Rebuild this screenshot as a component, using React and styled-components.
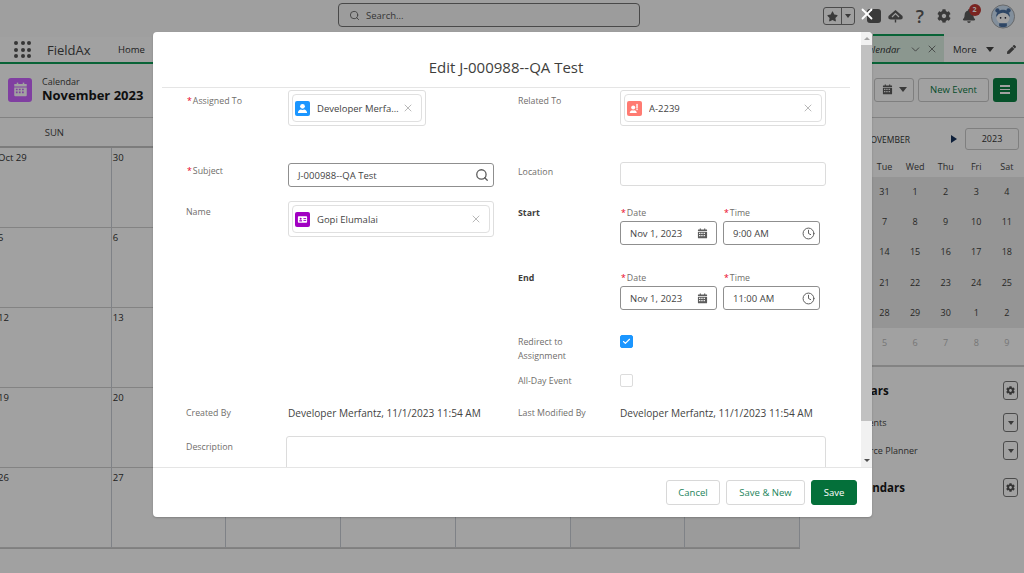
import React from "react";
import styled, { createGlobalStyle } from "styled-components";
import { X, Search, Clock, Check, ChevronDown } from "lucide-react";
import { FaBell, FaCog, FaPen, FaStar } from "react-icons/fa";

const GlobalStyle = createGlobalStyle`
  html, body {
    margin: 0;
    padding: 0;
    background: #fff;
    font-family: "Open Sans", "Liberation Sans", sans-serif;
    color: #3e3e3c;
  }
  * { box-sizing: border-box; }
`;

const Page = styled.div`
  position: relative;
  width: 1024px;
  height: 573px;
  overflow: hidden;
  background: #fff;
  display: flex;
  flex-direction: column;
`;

/* ---------- page behind the dialog ---------- */

const TopBar = styled.header`
  height: 37px;
  flex: none;
  display: flex;
  align-items: flex-start;
  padding: 3px 9px 0 338px;
  background: #fcfcfc;
`;

const SearchBox = styled.div`
  width: 302px;
  height: 24px;
  border: 1px solid #747474;
  border-radius: 4px;
  background: #f8f8f8;
  display: flex;
  align-items: center;
  gap: 6px;
  padding: 0 10px;
  font-size: 9.5px;
  color: #555;
`;

const TopIcons = styled.div`
  margin-left: auto;
  display: flex;
  align-items: center;
  height: 26px;
  color: #5c5c5c;
`;

const FavGroup = styled.div`
  width: 32px;
  height: 18px;
  border: 1px solid #777;
  border-radius: 3px;
  display: flex;
  align-items: center;
  margin-right: 12px;
`;

const FavStar = styled.span`
  width: 18px;
  display: flex;
  justify-content: center;
  border-right: 1px solid #777;
  height: 100%;
  align-items: center;
  font-size: 11px;
`;

const Caret = styled.span`
  width: 0;
  height: 0;
  border-left: ${(p) => p.$size || 3}px solid transparent;
  border-right: ${(p) => p.$size || 3}px solid transparent;
  border-top: ${(p) => (p.$size || 3) + 1}px solid ${(p) => p.$color || "#5c5c5c"};
  display: inline-block;
  flex: none;
`;

const FavCaret = styled(Caret)`
  margin-left: 3px;
`;

const PlusBox = styled.span`
  width: 14px;
  height: 14px;
  border-radius: 3px;
  background: #5c5c5c;
  margin-right: 2px;
`;

const TopIcon = styled.span`
  width: 24.5px;
  display: flex;
  justify-content: center;
  align-items: center;
  font-size: ${(p) => p.$size || 14}px;
  font-weight: 600;
  position: relative;
`;

const AvatarSlot = styled.span`
  width: 24px;
  margin-left: 10px;
  display: flex;
  justify-content: center;
`;

const Badge = styled.span`
  position: absolute;
  top: -5px;
  left: 12px;
  width: 12px;
  height: 12px;
  border-radius: 50%;
  background: #c23934;
  color: #fff;
  font-size: 7px;
  font-weight: 700;
  line-height: 12px;
  text-align: center;
`;

const NavBar = styled.nav`
  height: 27px;
  flex: none;
  display: flex;
  align-items: center;
  padding-left: 14px;
  background: #fff;
  border-bottom: 2px solid #0f9d58;
`;

const Waffle = styled.div`
  display: grid;
  grid-template-columns: repeat(3, 4px);
  gap: 2.5px;
  margin-right: 16px;
  span {
    width: 4px;
    height: 4px;
    border-radius: 50%;
    background: #555;
  }
`;

const AppName = styled.div`
  font-size: 13px;
  color: #444;
  width: 71px;
`;

const NavLink = styled.div`
  font-size: 9.5px;
  color: #333;
`;

const ActiveTab = styled.div`
  margin-left: auto;
  margin-top: -3px;
  width: 71px;
  height: 28px;
  align-self: flex-start;
  background: #dcefe3;
  border-top: 2px solid #0f9d58;
  display: flex;
  align-items: center;
  justify-content: flex-end;
  padding-right: 6px;
  font-size: 9.5px;
  font-style: italic;
  color: #333;
  > * { flex: none; }
`;

const TabLabel = styled.span`
  margin-right: 9px;
`;

const TabChevron = styled(ChevronDown)`
  margin-right: 4px;
`;

const NavMore = styled.div`
  display: flex;
  align-items: center;
  width: 80px;
  padding-left: 9px;
  font-size: 9.5px;
  color: #333;
  svg:last-child { margin-left: 13px; }
`;

const MoreLabel = styled.span`
  margin-right: 10px;
`;

const PageHeader = styled.div`
  height: 54px;
  flex: none;
  display: flex;
  align-items: center;
  padding: 0 7px 2px 8px;
  border-bottom: 1px solid #cfcfcf;
`;

const CalendarBadge = styled.div`
  width: 24px;
  height: 24px;
  border-radius: 3px;
  background: #cb65ff;
  display: flex;
  align-items: center;
  justify-content: center;
  margin-right: 10px;
`;

const TitleWrap = styled.div`
  display: flex;
  flex-direction: column;
`;

const Crumb = styled.div`
  font-size: 9px;
  line-height: 12px;
`;

const MonthTitle = styled.div`
  font-size: 13px;
  line-height: 15px;
  font-weight: 700;
  color: #181818;
`;

const HeaderActions = styled.div`
  margin-left: auto;
  display: flex;
  align-items: center;
  gap: 4px;
`;

const GhostButton = styled.div`
  height: 24px;
  width: ${(p) => p.$width}px;
  border: 1px solid #c9c9c9;
  border-radius: 3px;
  background: #fff;
  color: #0b7a45;
  font-size: 9.5px;
  display: flex;
  align-items: center;
  justify-content: center;
  gap: 6px;
`;

const MenuButton = styled.div`
  width: 24px;
  height: 24px;
  border-radius: 3px;
  background: #0b8043;
  display: flex;
  flex-direction: column;
  align-items: center;
  justify-content: center;
  gap: 2px;
  span {
    width: 10px;
    height: 1.5px;
    background: #fff;
  }
`;

const Workspace = styled.div`
  flex: 1;
  display: flex;
  min-height: 0;
`;

const CalendarPane = styled.section`
  width: 800px;
  flex: none;
  overflow: hidden;
`;

const CalendarGrid = styled.div`
  margin-left: -3px;
  width: 803px;
  display: grid;
  grid-template-columns: repeat(7, 1fr);
  grid-auto-rows: 80px;
  border-bottom: 1px solid #c9c9c9;
`;

const WeekHead = styled.div`
  height: 30px;
  display: grid;
  margin-left: -3px;
  width: 803px;
  grid-template-columns: repeat(7, 1fr);
  border-bottom: 2px solid #c4c4c4;
  font-size: 9.5px;
  color: #444;
  span {
    text-align: center;
    line-height: 29px;
  }
`;

const DayCell = styled.div`
  border-right: 1px solid #c9ced6;
  border-bottom: 1px solid #d0d0d0;
  padding: 3px 1px;
  font-size: 9.5px;
  line-height: 14px;
  color: #333;
  background: ${(p) => (p.$shaded ? "#f5f5f5" : "#fff")};
`;

const SidePane = styled.aside`
  flex: 1;
  min-width: 0;
  padding-left: 8px;
  display: flex;
  flex-direction: column;
`;

const MiniHeader = styled.div`
  display: flex;
  align-items: center;
  height: 22px;
  margin-top: 10px;
  padding-right: 5px;
  font-size: 8.5px;
  color: #333;
`;

const MonthLabel = styled.span`
  margin-left: 56px;
  width: 87px;
`;

const NextArrow = styled.span`
  width: 0;
  height: 0;
  border-top: 4px solid transparent;
  border-bottom: 4px solid transparent;
  border-left: 6px solid #16325c;
`;

const YearBox = styled.div`
  margin-left: auto;
  width: 54px;
  height: 22px;
  border: 1px solid #c9c9c9;
  border-radius: 3px;
  text-align: center;
  font-size: 9px;
  line-height: 20px;
`;

const MiniWeek = styled.div`
  display: grid;
  grid-template-columns: repeat(7, 30.6px);
  margin-top: 7px;
  height: 20px;
  font-size: 9px;
  color: #444;
  span { text-align: center; line-height: 20px; }
`;

const MiniGrid = styled.div`
  display: grid;
  grid-template-columns: repeat(7, 30.6px);
  grid-auto-rows: 30.2px;
  background: linear-gradient(#ececec, #ececec) no-repeat 0 0 / 100% 151px;
`;

const MiniDay = styled.span`
  font-size: 9px;
  line-height: 30px;
  text-align: center;
  color: ${(p) => (p.$muted ? "#bbb" : "#3e3e3c")};
`;

const SideRule = styled.div`
  height: 2px;
  margin-top: 7px;
  background: #d0d0d0;
`;

const SideSection = styled.div`
  display: flex;
  align-items: center;
  justify-content: space-between;
  padding: 0 6px 0 ${(p) => (p.$bold ? 3 : 36)}px;
  height: 19px;
  margin-top: ${(p) => p.$top}px;
  font-size: ${(p) => (p.$bold ? 11.5 : 9)}px;
  font-weight: ${(p) => (p.$bold ? 700 : 400)};
  color: ${(p) => (p.$bold ? "#181818" : "#444")};
`;

const SquareButton = styled.span`
  width: 15px;
  height: 19px;
  border: 1px solid #777;
  border-radius: 3px;
  background: #fff;
  display: flex;
  align-items: center;
  justify-content: center;
  color: #555;
  font-size: 9px;
`;

/* ---------- dialog ---------- */

const Backdrop = styled.div`
  position: absolute;
  inset: 0;
  background: rgba(0, 0, 0, 0.37);
`;

const CloseButton = styled.span`
  position: absolute;
  top: 5px;
  left: 858px;
  color: #fff;
  display: flex;
`;

const Modal = styled.div`
  position: absolute;
  top: 32px;
  left: 153px;
  width: 719px;
  height: 485px;
  background: #fff;
  border-radius: 4px;
  display: flex;
  flex-direction: column;
  box-shadow: 0 1px 2px rgba(0, 0, 0, 0.2);
  overflow: hidden;
`;

const ModalTop = styled.div`
  height: 435px;
  flex: none;
  display: flex;
  min-height: 0;
`;

const ModalBody = styled.div`
  flex: 1;
  min-width: 0;
  overflow: hidden;
`;

const Scrollbar = styled.div`
  width: 11px;
  flex: none;
  background: #f1f1f1;
  display: flex;
  flex-direction: column;
  align-items: center;
`;

const ScrollArrow = styled.span`
  height: ${(p) => p.$height}px;
  flex: none;
  display: flex;
  align-items: center;
  justify-content: center;
  span {
    width: 0;
    height: 0;
    border-left: 3px solid transparent;
    border-right: 3px solid transparent;
    ${(p) => (p.$up ? "border-bottom: 3px solid #a3a3a3;" : "border-top: 3px solid #505050;")}
  }
`;

const ScrollThumb = styled.div`
  width: 100%;
  height: 376px;
  background: #c1c1c1;
`;

const ScrollSpacer = styled.div`
  flex: 1;
`;

const ModalHeading = styled.h2`
  margin: 0 11px 0 9px;
  height: 56px;
  padding-top: 14px;
  border-bottom: 1px solid #e5e5e5;
  display: flex;
  align-items: center;
  justify-content: center;
  font-size: 15px;
  font-weight: 400;
  color: #3e3e3c;
`;

const Form = styled.div`
  padding: 2px 0 0 33px;
`;

const Columns = styled.div`
  display: grid;
  grid-template-columns: 332px 1fr;
`;

const Stack = styled.div`
  display: flex;
  flex-direction: column;
`;

const Row = styled.div`
  display: flex;
  margin-top: ${(p) => p.$top || 0}px;
  min-height: ${(p) => p.$height || 0}px;
`;

const Label = styled.div`
  width: 102px;
  flex: none;
  padding-top: ${(p) => p.$pad || 0}px;
  font-size: 8.8px;
  line-height: 14px;
  color: ${(p) => (p.$strong ? "#3e3e3c" : "#706e6b")};
  font-weight: ${(p) => (p.$strong ? 700 : 400)};
`;

const Required = styled.span`
  color: #ea001e;
  margin: 0 1px 0 1px;
`;

const LookupFrame = styled.div`
  width: ${(p) => p.$width}px;
  height: 36px;
  border: 1px solid #dedede;
  border-radius: 3px;
  padding: 3px;
`;

const LookupPill = styled.div`
  height: 28px;
  border: 1px solid #e0e0e0;
  border-radius: 4px;
  display: flex;
  align-items: center;
  padding: 0 7px 0 2px;
  font-size: 9.5px;
  color: #444;
`;

const ObjectIcon = styled.span`
  width: 15px;
  height: 15px;
  flex: none;
  border-radius: 2px;
  background: ${(p) => p.$color};
  margin-right: 7px;
  display: flex;
  align-items: center;
  justify-content: center;
`;

const PillText = styled.span`
  flex: 1;
  min-width: 0;
  white-space: nowrap;
  overflow: hidden;
  text-overflow: ellipsis;
`;

const TextBox = styled.div`
  width: ${(p) => p.$width}px;
  height: 24px;
  border: 1px solid ${(p) => (p.$dark ? "#8f8f8f" : "#dcdcdc")};
  border-radius: 3px;
  display: flex;
  align-items: center;
  justify-content: space-between;
  padding: 0 4px 0 9px;
  font-size: 9.5px;
  color: #444;
  background: #fff;
`;

const DateIconSlot = styled.span`
  display: flex;
  margin-right: 4px;
`;

const PairFields = styled.div`
  display: flex;
  gap: 6px;
`;

const SubField = styled.div`
  display: flex;
  flex-direction: column;
  gap: 1px;
`;

const SubLabel = styled.div`
  font-size: 8.8px;
  line-height: 14px;
  color: #706e6b;
`;

const CheckBox = styled.span`
  width: 13px;
  height: 13px;
  border-radius: 2px;
  border: 1px solid ${(p) => (p.$on ? "#1b96ff" : "#dcdcdc")};
  background: ${(p) => (p.$on ? "#1b96ff" : "#fff")};
  color: #fff;
  display: flex;
  align-items: center;
  justify-content: center;
`;

const StaticValue = styled.div`
  font-size: 10.1px;
  line-height: 14px;
  color: #444;
  white-space: nowrap;
`;

const DescriptionBox = styled.div`
  width: 540px;
  height: 60px;
  margin-left: -2px;
  border: 1px solid #dcdcdc;
  border-radius: 3px;
`;

const ModalFooter = styled.footer`
  height: 50px;
  flex: none;
  border-top: 1px solid #e5e5e5;
  display: flex;
  align-items: center;
  justify-content: flex-end;
  gap: 6px;
  padding: 0 15px 1px 0;
`;

const FooterButton = styled.button`
  width: ${(p) => p.$width}px;
  height: 25px;
  border-radius: 3px;
  border: 1px solid ${(p) => (p.$primary ? "#04703a" : "#d8d8d8")};
  background: ${(p) => (p.$primary ? "#04703a" : "#fff")};
  color: ${(p) => (p.$primary ? "#fff" : "#23845b")};
  font-family: inherit;
  font-size: 9.5px;
  padding: 0;
`;

/* ---------- drawings ---------- */

const UserGlyph = () => (
  <svg width="11" height="11" viewBox="0 0 12 12" fill="#fff">
    <circle cx="6" cy="3.6" r="2.6" />
    <path d="M1 11c0-2.4 1.8-3.6 3.2-3.8.8.5 2.8.5 3.6 0C9.200 7.400 11 8.600 11 11z" />
  </svg>
);

const AssignGlyph = () => (
  <svg width="11" height="11" viewBox="0 0 12 12" fill="#fff">
    <circle cx="4.600" cy="5" r="2.200" />
    <path d="M.8 11c0-2 1.500-3 2.700-3.200.6.400 1.800.4 2.400 0C7.100 8 8.500 9 8.500 11z" />
    <rect x="8" y="1" width="1.500" height="5" />
    <circle cx="8.800" cy="7.200" r=".8" />
  </svg>
);

const ContactGlyph = () => (
  <svg width="11" height="11" viewBox="0 0 12 12">
    <rect x="1" y="2.500" width="10" height="7" rx=".8" fill="#fff" />
    <circle cx="4" cy="5.300" r="1.100" fill="#a100c2" />
    <rect x="2.500" y="6.800" width="3" height="1.300" fill="#a100c2" />
    <rect x="7" y="4.500" width="3" height="1" fill="#a100c2" />
    <rect x="7" y="6.500" width="3" height="1" fill="#a100c2" />
  </svg>
);

const CalendarGlyph = ({ size = 11, color = "#5c5c5c" }) => (
  <svg width={size} height={size} viewBox="0 0 12 12" fill={color}>
    <rect x="3" y="0.500" width="1.200" height="2" />
    <rect x="7.800" y="0.500" width="1.200" height="2" />
    <rect x="1" y="1.500" width="10" height="2" rx=".4" />
    <path d="M1 4.300h10v6.200a.8.8 0 0 1-.8.8H1.800a.8.8 0 0 1-.8-.8zm1.300 1v1.200h1.400V5.300zm2.400 0v1.200h1.400V5.300zm2.500 0v1.200h1.400V5.300zM2.300 7.600v1.300h1.400V7.600zm2.400 0v1.300h1.400V7.600zm2.500 0v1.300h1.400V7.600z" fillRule="evenodd" />
  </svg>
);

const TrailheadGlyph = () => (
  <svg width="17" height="15" viewBox="0 0 17 15">
    <path d="M8.500 1 L12 4 L15.500 7 Q16.500 10.500 13 10.500 L4 10.500 Q.5 10.500 1.500 7 L5 4z" fill="#5c5c5c" />
    <path d="M5 8 L8.500 4.500 L12 8" stroke="#fcfcfc" strokeWidth="1.200" fill="none" />
    <rect x="7.800" y="10.500" width="1.400" height="3" fill="#5c5c5c" />
  </svg>
);

const Avatar = () => (
  <svg width="27" height="27" viewBox="0 0 28 28">
    <circle cx="14" cy="14" r="13.500" fill="#cfe3f7" stroke="#9a9a9a" />
    <circle cx="7.500" cy="7" r="2.500" fill="#4a6fa0" />
    <circle cx="20.500" cy="7" r="2.500" fill="#4a6fa0" />
    <path d="M6 14c0-5 3.500-8 8-8s8 3 8 8z" fill="#4a6fa0" />
    <ellipse cx="14" cy="16" rx="7.500" ry="6.500" fill="#fff" />
    <circle cx="11.200" cy="15.500" r="1" fill="#223" />
    <circle cx="16.800" cy="15.500" r="1" fill="#223" />
    <path d="M9.500 22h9v3.500a11 11 0 0 1-9 0z" fill="#4a6fa0" />
  </svg>
);

/* ---------- data ---------- */

const weekRows = [
  ["Oct 29", "30", "31", "Nov 1", "2", "3", "4"],
  ["5", "6", "7", "8", "9", "10", "11"],
  ["12", "13", "14", "15", "16", "17", "18"],
  ["19", "20", "21", "22", "23", "24", "25"],
  ["26", "27", "28", "29", "30", "1", "2"],
];

const miniDays = [
  29, 30, 31, 1, 2, 3, 4, 5, 6, 7, 8, 9, 10, 11, 12, 13, 14, 15, 16, 17, 18, 19,
  20, 21, 22, 23, 24, 25, 26, 27, 28, 29, 30, 1, 2, 3, 4, 5, 6, 7, 8, 9,
];

const Lookup = ({ width, color, glyph, children }) => (
  <LookupFrame $width={width}>
    <LookupPill>
      <ObjectIcon $color={color}>{glyph}</ObjectIcon>
      <PillText>{children}</PillText>
      <X size={12} strokeWidth={1.2} color="#8a8a8a" />
    </LookupPill>
  </LookupFrame>
);

const DateTime = ({ time }) => (
  <PairFields>
    <SubField>
      <SubLabel>
        <Required>*</Required>Date
      </SubLabel>
      <TextBox $width={97} $dark>
        Nov 1, 2023
        <DateIconSlot>
          <CalendarGlyph />
        </DateIconSlot>
      </TextBox>
    </SubField>
    <SubField>
      <SubLabel>
        <Required>*</Required>Time
      </SubLabel>
      <TextBox $width={97} $dark>
        {time}
        <Clock size={13} color="#5c5c5c" strokeWidth={1.8} />
      </TextBox>
    </SubField>
  </PairFields>
);

export default function App() {
  return (
    <Page>
      <GlobalStyle />
      <TopBar>
        <SearchBox>
          <Search size={11} color="#666" />
          Search...
        </SearchBox>
        <TopIcons>
          <FavGroup>
            <FavStar>
              <FaStar />
            </FavStar>
            <FavCaret />
          </FavGroup>
          <PlusBox />
          <TopIcon>
            <TrailheadGlyph />
          </TopIcon>
          <TopIcon $size={18}>?</TopIcon>
          <TopIcon>
            <FaCog />
          </TopIcon>
          <TopIcon>
            <FaBell />
            <Badge>2</Badge>
          </TopIcon>
          <AvatarSlot>
            <Avatar />
          </AvatarSlot>
        </TopIcons>
      </TopBar>

      <NavBar>
        <Waffle>
          {Array.from({ length: 9 }, (_, i) => (
            <span key={i} />
          ))}
        </Waffle>
        <AppName>FieldAx</AppName>
        <NavLink>Home</NavLink>
        <ActiveTab>
          <TabLabel>Calendar</TabLabel>
          <TabChevron size={13} color="#555" strokeWidth={1.5} />
          <X size={12} color="#555" strokeWidth={1.5} />
        </ActiveTab>
        <NavMore>
          <MoreLabel>More</MoreLabel>
          <Caret $size={4} $color="#444" />
          <FaPen size={9} color="#555" />
        </NavMore>
      </NavBar>

      <PageHeader>
        <CalendarBadge>
          <CalendarGlyph size={15} color="#fff" />
        </CalendarBadge>
        <TitleWrap>
          <Crumb>Calendar</Crumb>
          <MonthTitle>November 2023</MonthTitle>
        </TitleWrap>
        <HeaderActions>
          <GhostButton $width={40}>
            <CalendarGlyph />
            <Caret $size={4} />
          </GhostButton>
          <GhostButton $width={71}>New Event</GhostButton>
          <MenuButton>
            <span />
            <span />
            <span />
          </MenuButton>
        </HeaderActions>
      </PageHeader>

      <Workspace>
        <CalendarPane>
          <WeekHead>
            {["SUN", "MON", "TUE", "WED", "THU", "FRI", "SAT"].map((d) => (
              <span key={d}>{d}</span>
            ))}
          </WeekHead>
          <CalendarGrid>
            {weekRows.flat().map((d, i) => (
              <DayCell key={i} $shaded={i >= 33}>
                {d}
              </DayCell>
            ))}
          </CalendarGrid>
        </CalendarPane>

        <SidePane>
          <MiniHeader>
            <MonthLabel>NOVEMBER</MonthLabel>
            <NextArrow />
            <YearBox>2023</YearBox>
          </MiniHeader>
          <MiniWeek>
            {["Sun", "Mon", "Tue", "Wed", "Thu", "Fri", "Sat"].map((d) => (
              <span key={d}>{d}</span>
            ))}
          </MiniWeek>
          <MiniGrid>
            {miniDays.map((d, i) => (
              <MiniDay key={i} $muted={i >= 35}>
                {d}
              </MiniDay>
            ))}
          </MiniGrid>
          <SideRule />
          <SideSection $bold $top={14}>
            My Calendars
            <SquareButton>
              <FaCog />
            </SquareButton>
          </SideSection>
          <SideSection $top={13}>
            My Events
            <SquareButton>
              <Caret />
            </SquareButton>
          </SideSection>
          <SideSection $top={9}>
            Resource Planner
            <SquareButton>
              <Caret />
            </SquareButton>
          </SideSection>
          <SideSection $bold $top={18}>
            Other Calendars
            <SquareButton>
              <FaCog />
            </SquareButton>
          </SideSection>
        </SidePane>
      </Workspace>

      <Backdrop />
      <CloseButton>
        <X size={18} strokeWidth={2.4} />
      </CloseButton>

      <Modal>
        <ModalTop>
          <ModalBody>
            <ModalHeading>Edit J-000988--QA Test</ModalHeading>
            <Form>
              <Columns>
                <Stack>
                  <Row $height={36}>
                    <Label $pad={4}>
                      <Required>*</Required>Assigned To
                    </Label>
                    <Lookup width={138} color="#1b96ff" glyph={<UserGlyph />}>
                      Developer Merfantz
                    </Lookup>
                  </Row>
                  <Row $top={37}>
                    <Label $pad={1}>
                      <Required>*</Required>Subject
                    </Label>
                    <TextBox $width={206} $dark>
                      J-000988--QA Test
                      <Search size={14} color="#5c5c5c" strokeWidth={2.2} />
                    </TextBox>
                  </Row>
                  <Row $top={14}>
                    <Label $pad={4}>Name</Label>
                    <Lookup width={206} color="#a100c2" glyph={<ContactGlyph />}>
                      Gopi Elumalai
                    </Lookup>
                  </Row>
                </Stack>
                <Stack>
                  <Row $height={36}>
                    <Label $pad={4}>Related To</Label>
                    <Lookup width={206} color="#ff7b72" glyph={<AssignGlyph />}>
                      A-2239
                    </Lookup>
                  </Row>
                  <Row $top={36}>
                    <Label $pad={3}>Location</Label>
                    <TextBox $width={206} />
                  </Row>
                  <Row $top={20}>
                    <Label $strong>Start</Label>
                    <DateTime time="9:00 AM" />
                  </Row>
                  <Row $top={26}>
                    <Label $strong>End</Label>
                    <DateTime time="11:00 AM" />
                  </Row>
                  <Row $top={25} $height={28}>
                    <Label>
                      Redirect to
                      <br />
                      Assignment
                    </Label>
                    <CheckBox $on>
                      <Check size={9} strokeWidth={3} />
                    </CheckBox>
                  </Row>
                  <Row $top={11}>
                    <Label>All-Day Event</Label>
                    <CheckBox />
                  </Row>
                </Stack>
              </Columns>
              <Columns>
                <Row $top={18}>
                  <Label>Created By</Label>
                  <StaticValue>Developer Merfantz, 11/1/2023 11:54 AM</StaticValue>
                </Row>
                <Row $top={18}>
                  <Label>Last Modified By</Label>
                  <StaticValue>Developer Merfantz, 11/1/2023 11:54 AM</StaticValue>
                </Row>
              </Columns>
              <Row $top={16}>
                <Label $pad={4}>Description</Label>
                <DescriptionBox />
              </Row>
            </Form>
          </ModalBody>
          <Scrollbar>
            <ScrollArrow $up $height={13}>
              <span />
            </ScrollArrow>
            <ScrollThumb />
            <ScrollSpacer />
            <ScrollArrow $height={13}>
              <span />
            </ScrollArrow>
          </Scrollbar>
        </ModalTop>
        <ModalFooter>
          <FooterButton $width={54}>Cancel</FooterButton>
          <FooterButton $width={79}>Save &amp; New</FooterButton>
          <FooterButton $width={46} $primary>
            Save
          </FooterButton>
        </ModalFooter>
      </Modal>
    </Page>
  );
}
